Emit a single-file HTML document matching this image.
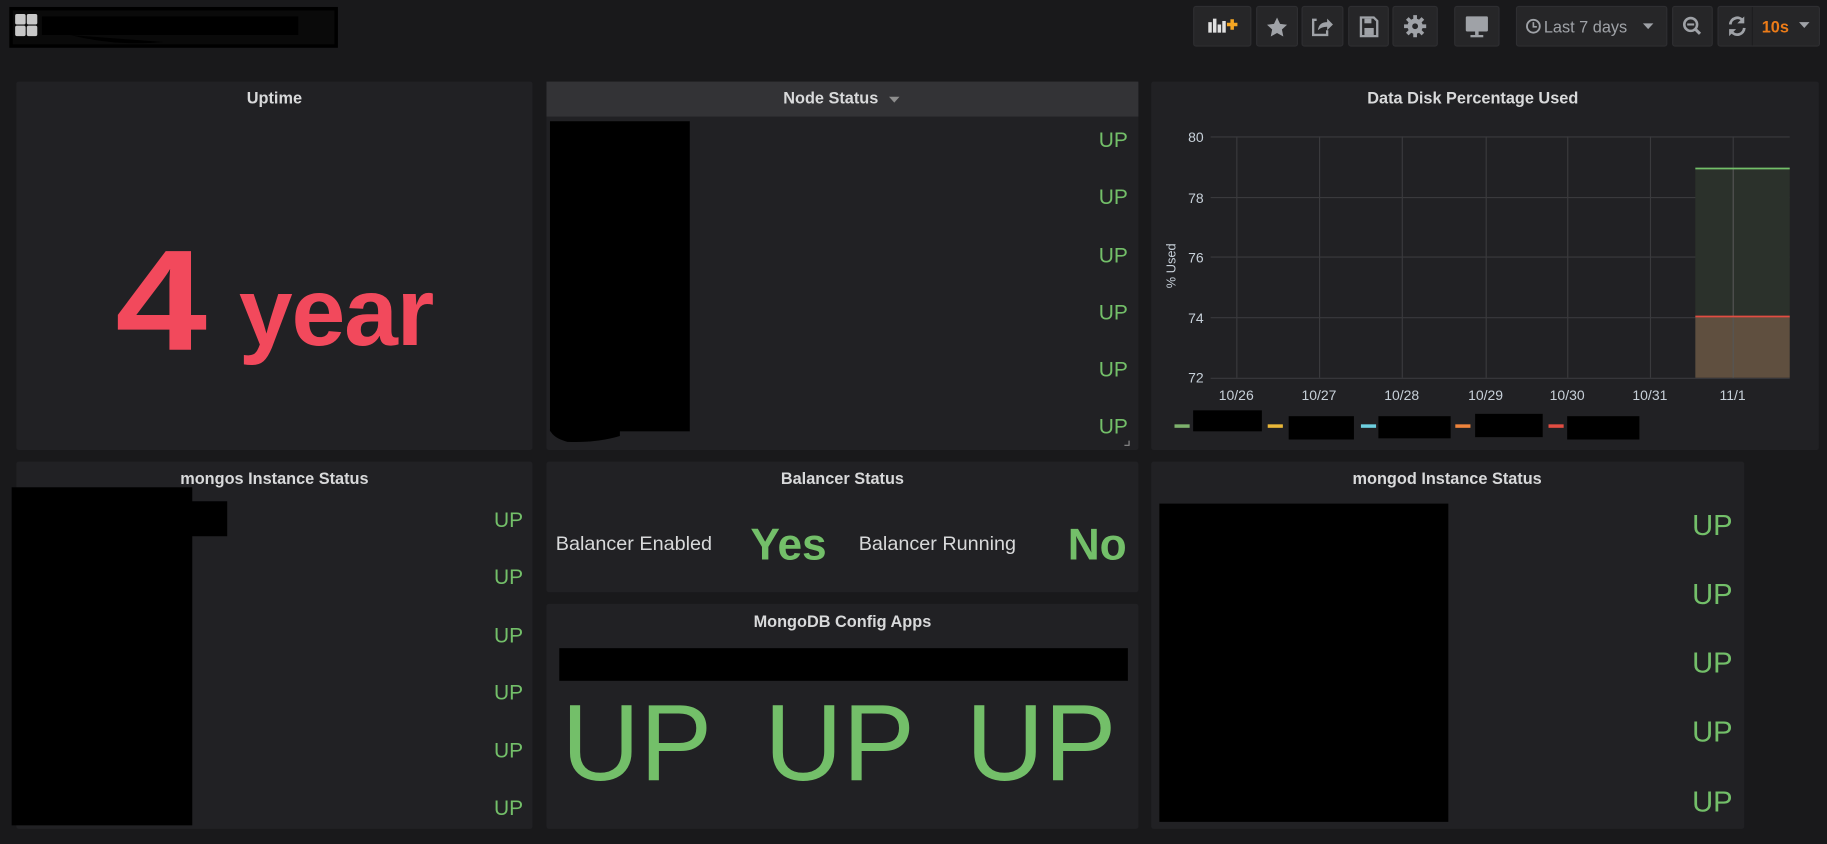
<!DOCTYPE html>
<html><head><meta charset="utf-8"><style>
html,body{margin:0;padding:0;background:#19191b;overflow:hidden;width:1827px;height:844px}
svg{display:block}
text{font-family:"Liberation Sans",sans-serif}
</style></head><body>
<svg width="1827" height="844" viewBox="0 0 1568 724" preserveAspectRatio="none" xmlns="http://www.w3.org/2000/svg">
<rect width="1568" height="724" fill="#19191b"/>
<!-- logo -->
<rect x="8" y="6" width="282" height="35" fill="#000"/>
<rect x="11" y="9" width="276" height="29" fill="#0a0a0a"/>
<g fill="#c8c8c8"><rect x="13" y="12" width="9" height="9" rx="1.5"/><rect x="23" y="12" width="9" height="9" rx="1.5"/><rect x="13" y="22" width="9" height="9" rx="1.5"/><rect x="23" y="22" width="9" height="9" rx="1.5"/></g>
<path d="M36 14 h220 v16 h-220 z M60 30 q40 10 80 6 z" fill="#000"/>
<!-- buttons -->
<g fill="#262628" stroke="#2e2e31" stroke-width="1">
<rect x="1024.5" y="5.5" width="49" height="34" rx="2"/>
<rect x="1078.5" y="5.5" width="35" height="34" rx="2"/>
<rect x="1117.5" y="5.5" width="35" height="34" rx="2"/>
<rect x="1157.5" y="5.5" width="34" height="34" rx="2"/>
<rect x="1195.5" y="5.5" width="38" height="34" rx="2"/>
<rect x="1248.5" y="5.5" width="38" height="34" rx="2"/>
<rect x="1301.5" y="5.5" width="129" height="34" rx="2"/>
<rect x="1435.5" y="5.5" width="34" height="34" rx="2"/>
<rect x="1474.5" y="5.5" width="87" height="34" rx="2"/>
</g>
<g fill="#e0e0e0"><rect x="1037" y="19" width="3" height="9"/><rect x="1041" y="16" width="3" height="12"/><rect x="1045" y="21" width="3" height="7"/><rect x="1049" y="18" width="3" height="10"/></g>
<path d="M1053 21h9M1057.5 16.5v9" stroke="#f5a623" stroke-width="3"/>
<path d="M1096 15 l2.6 5.5 6 .7 -4.4 4.1 1.2 6 -5.4-3 -5.4 3 1.2-6 -4.4-4.1 6-.7z" fill="#9fa2a7"/>
<path d="M1130 17h-3v13h12v-4" fill="none" stroke="#9fa2a7" stroke-width="2"/>
<path d="M1131 26q1-7 8-7v-3l5 5-5 5v-3q-5 0-8 3z" fill="#9fa2a7"/>
<path d="M1168 15h11l3 3v13h-14z" fill="none" stroke="#9fa2a7" stroke-width="2"/>
<rect x="1171" y="16" width="6" height="4" fill="#9fa2a7"/><rect x="1171" y="24" width="8" height="6" fill="#9fa2a7"/>
<g fill="#9fa2a7"><circle cx="1214.5" cy="22.5" r="6.5"/>
<g stroke="#9fa2a7" stroke-width="3.2"><path d="M1214.5 13v19M1205 22.5h19M1207.8 15.8l13.4 13.4M1221.2 15.8l-13.4 13.4"/></g></g>
<circle cx="1214.5" cy="22.5" r="2.5" fill="#262628"/>
<rect x="1258" y="14" width="19" height="13" rx="1" fill="#9fa2a7"/><rect x="1266" y="27" width="3" height="3" fill="#9fa2a7"/><rect x="1262" y="30" width="11" height="2" fill="#9fa2a7"/>
<circle cx="1316" cy="22.5" r="5.5" fill="none" stroke="#9fa2a7" stroke-width="1.6"/><path d="M1316 19v4h3" fill="none" stroke="#9fa2a7" stroke-width="1.4"/>
<text x="1325" y="28" font-size="14" fill="#9fa2a7">Last 7 days</text>
<path d="M1410 20h9l-4.5 5z" fill="#9fa2a7"/>
<circle cx="1451" cy="21" r="5.5" fill="none" stroke="#9fa2a7" stroke-width="2.2"/><path d="M1455 25l4 4" stroke="#9fa2a7" stroke-width="2.6"/><path d="M1448 21h6" stroke="#9fa2a7" stroke-width="1.8"/>
<path d="M1485 21a6 6 0 0 1 11-3 M1497 24a6 6 0 0 1-11 3" fill="none" stroke="#9fa2a7" stroke-width="2.4"/>
<path d="M1497 14v6h-6z M1484 31v-6h6z" fill="#9fa2a7"/>
<line x1="1504" y1="6" x2="1504" y2="39" stroke="#1e1e20"/>
<text x="1512" y="28" font-size="14" font-weight="bold" fill="#eb7b18">10s</text>
<path d="M1544 19h9l-4.5 5z" fill="#9fa2a7"/>

<!-- panels -->
<g fill="#212124">
<rect x="14" y="70" width="443" height="316" rx="2"/>
<rect x="469" y="70" width="508" height="316" rx="2"/>
<rect x="988" y="70" width="573" height="316" rx="2"/>
<rect x="14" y="396" width="443" height="315" rx="2"/>
<rect x="469" y="396" width="508" height="112" rx="2"/>
<rect x="469" y="518" width="508" height="193" rx="2"/>
<rect x="988" y="396" width="509" height="315" rx="2"/>
</g>
<rect x="469" y="70" width="508" height="30" fill="#333336"/>
<g font-size="14" font-weight="bold" fill="#d8d9da" text-anchor="middle">
<text x="235.5" y="89">Uptime</text>
<text x="713" y="89">Node Status</text>
<text x="1264" y="89">Data Disk Percentage Used</text>
<text x="235.5" y="415">mongos Instance Status</text>
<text x="723" y="415">Balancer Status</text>
<text x="723" y="538">MongoDB Config Apps</text>
<text x="1242" y="415">mongod Instance Status</text>
</g>
<path d="M763 83h9l-4.5 5z" fill="#8e8e8e"/>

<!-- uptime -->
<text transform="translate(99 300) scale(1.15 1)" font-size="123" font-weight="bold" fill="#f2495c">4</text>
<text x="205" y="296" font-size="83" font-weight="bold" fill="#f2495c" letter-spacing="-1">year</text>

<!-- node status -->
<rect x="472" y="104" width="120" height="266" fill="#000"/>
<path d="M472 368 h60 v6 q-20 6 -45 5 q-12 -3 -15 -10z" fill="#000"/>
<g font-size="18" fill="#73bf69" text-anchor="end">
<text x="968" y="126">UP</text><text x="968" y="175">UP</text><text x="968" y="225">UP</text><text x="968" y="274">UP</text><text x="968" y="323">UP</text><text x="968" y="372">UP</text>
</g>
<path d="M969 378v4h-4" fill="none" stroke="#8e8e8e" stroke-width="1"/>

<!-- graph -->
<g stroke="#3a3a3d" stroke-width="1">
<path d="M1039 117.5H1536M1039 169.5H1536M1039 220.5H1536M1039 272.5H1536M1039 324.5H1536"/>
<path d="M1061.5 117v207M1132.5 117v207M1203.5 117v207M1275.5 117v207M1345.5 117v207M1416.5 117v207M1487.5 117v207"/>
</g>
<rect x="1455" y="144" width="81" height="128" fill="#2b312b"/>
<rect x="1455" y="272" width="81" height="52" fill="#5f4f3f"/>
<line x1="1487.5" y1="144" x2="1487.5" y2="324" stroke="#555" stroke-width="1"/>
<line x1="1455" y1="144.5" x2="1536" y2="144.5" stroke="#73bf69" stroke-width="1.5"/>
<line x1="1455" y1="271.5" x2="1536" y2="271.5" stroke="#e24d42" stroke-width="1.5"/>
<g font-size="12" fill="#c7d0d9" text-anchor="end">
<text x="1033" y="122">80</text><text x="1033" y="174">78</text><text x="1033" y="225">76</text><text x="1033" y="277">74</text><text x="1033" y="328">72</text>
</g>
<text transform="translate(1009 228) rotate(-90)" font-size="11" fill="#c7d0d9" text-anchor="middle">% Used</text>
<g font-size="12" fill="#c7d0d9" text-anchor="middle">
<text x="1061" y="343">10/26</text><text x="1132" y="343">10/27</text><text x="1203" y="343">10/28</text><text x="1275" y="343">10/29</text><text x="1345" y="343">10/30</text><text x="1416" y="343">10/31</text><text x="1487" y="343">11/1</text>
</g>
<rect x="1008" y="364" width="13" height="3" fill="#7eb26d"/><rect x="1024" y="352" width="59" height="18" fill="#000"/>
<rect x="1088" y="364" width="13" height="3" fill="#eab839"/><rect x="1106" y="357" width="56" height="20" fill="#000"/>
<rect x="1168" y="364" width="13" height="3" fill="#6ed0e0"/><rect x="1183" y="357" width="62" height="19" fill="#000"/>
<rect x="1249" y="364" width="13" height="3" fill="#ef843c"/><rect x="1266" y="355" width="58" height="20" fill="#000"/>
<rect x="1329" y="364" width="13" height="3" fill="#e24d42"/><rect x="1345" y="357" width="62" height="20" fill="#000"/>

<!-- mongos -->
<rect x="10" y="418" width="155" height="290" fill="#000"/>
<rect x="160" y="430" width="35" height="30" fill="#000"/>
<g font-size="18" fill="#73bf69" text-anchor="end">
<text x="449" y="452">UP</text><text x="449" y="501">UP</text><text x="449" y="551">UP</text><text x="449" y="600">UP</text><text x="449" y="650">UP</text><text x="449" y="699">UP</text>
</g>

<!-- balancer -->
<text x="477" y="472" font-size="17" fill="#d8d9da">Balancer Enabled</text>
<text x="644" y="480" font-size="38" font-weight="bold" fill="#73bf69">Yes</text>
<text x="737" y="472" font-size="17" fill="#d8d9da">Balancer Running</text>
<text x="967" y="480" font-size="38" font-weight="bold" fill="#73bf69" text-anchor="end">No</text>

<!-- config -->
<rect x="480" y="556" width="488" height="28" fill="#000"/>
<g font-size="93" fill="#73bf69">
<text x="482" y="669">UP</text><text x="656" y="669">UP</text><text x="829" y="669">UP</text>
</g>

<!-- mongod -->
<rect x="995" y="432" width="248" height="273" fill="#000"/>
<g font-size="25" fill="#73bf69" text-anchor="end">
<text x="1487" y="459">UP</text><text x="1487" y="518">UP</text><text x="1487" y="577">UP</text><text x="1487" y="636">UP</text><text x="1487" y="696">UP</text>
</g>
</svg>
</body></html>
